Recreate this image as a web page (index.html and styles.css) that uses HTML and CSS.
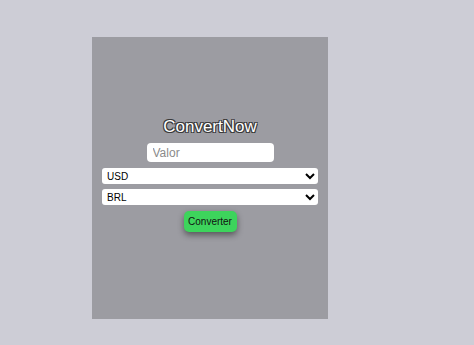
FILE: index.html
```html
<!DOCTYPE html>
<html lang="pt">
<head>
<meta charset="utf-8">
<title>ConvertNow</title>
<link rel="stylesheet" href="styles.css">
</head>
<body>
<div class="card">
  <h1 class="title">ConvertNow</h1>
  <input class="value" type="text" placeholder="Valor">
  <select class="currency">
    <option>USD</option>
    <option>BRL</option>
  </select>
  <select class="currency">
    <option>BRL</option>
    <option>USD</option>
  </select>
  <button class="convert">Converter</button>
</div>
</body>
</html>
```
FILE: styles.css
```css
html, body {
  margin: 0;
  padding: 0;
  background: #cdcdd6;
  font-family: "Liberation Sans", Arial, sans-serif;
}
body {
  padding: 37px 0 0 92px;
  height: 345px;
  box-sizing: border-box;
}
.card {
  width: 236px;
  height: 282px;
  box-sizing: border-box;
  background: #9c9ca2;
  padding: 79px 10px 0;
  display: flex;
  flex-direction: column;
  align-items: center;
}
.title {
  margin: 0;
  font-size: 17px;
  font-weight: normal;
  line-height: 21px;
  color: #fff;
  text-shadow: -1px -1px 0 #3a3a3a, 1px -1px 0 #3a3a3a, -1px 1px 0 #3a3a3a, 1px 1px 0 #3a3a3a;
}
.value {
  margin-top: 6px;
  width: 127px;
  height: 19px;
  box-sizing: border-box;
  border: none;
  border-radius: 4px;
  padding: 0 6px;
  font-family: "Liberation Sans", Arial, sans-serif;
  font-size: 12px;
  background: #fff;
  outline: none;
}
.value::placeholder {
  color: #8a8a8a;
}
.currency {
  width: 216px;
  height: 16px;
  box-sizing: border-box;
  border: none;
  border-radius: 3px;
  background: #fff;
  font-family: "Liberation Sans", Arial, sans-serif;
  font-size: 10px;
  color: #000;
  padding: 0 0 0 1px;
  margin-top: 6px;
}
.currency + .currency {
  margin-top: 5px;
}
.convert {
  margin-top: 6px;
  width: 53px;
  height: 21px;
  border: none;
  border-radius: 5px;
  background: #3dd45c;
  color: #111;
  font-family: "Liberation Sans", Arial, sans-serif;
  font-size: 10px;
  padding: 0;
  box-shadow: 0 3px 6px rgba(0, 0, 0, 0.45);
}
```
